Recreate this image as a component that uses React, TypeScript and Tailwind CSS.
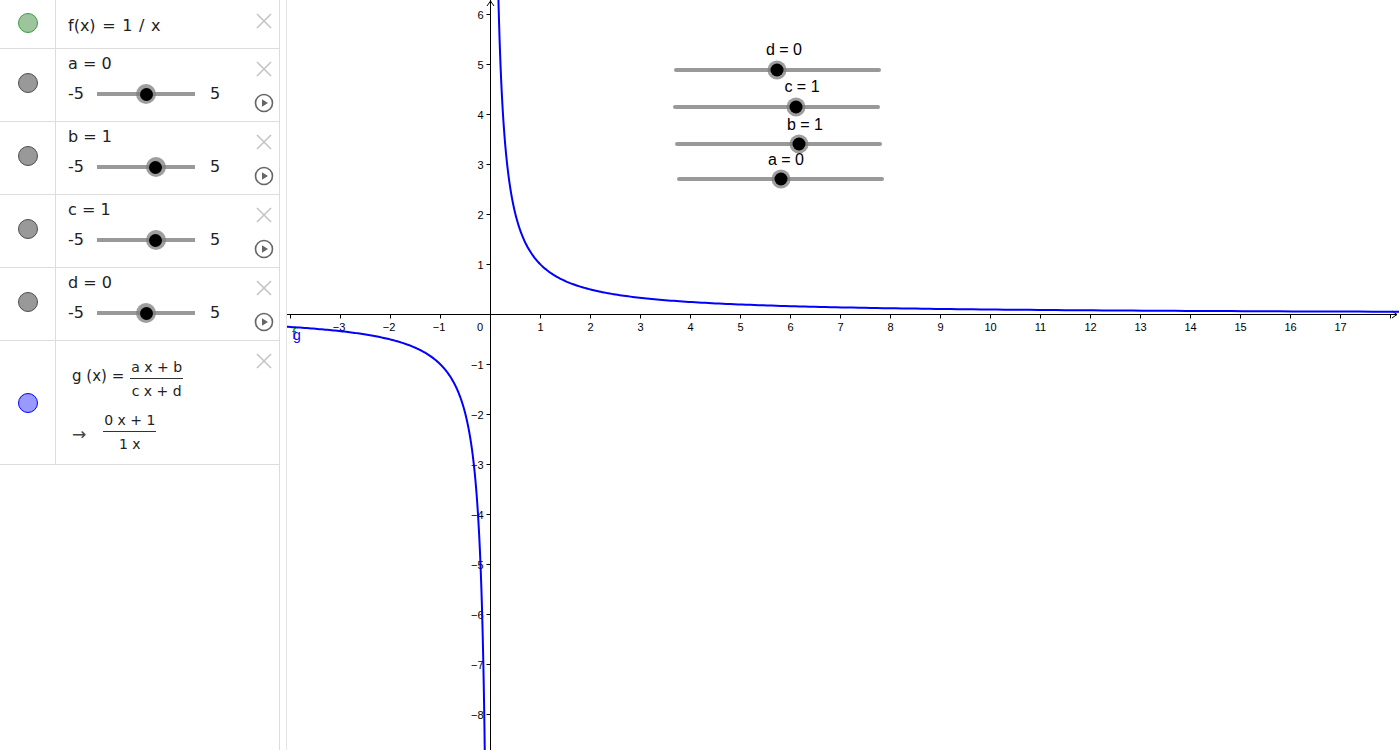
import React from "react";

const OX = 203.5;
const OY = 314.5;
const S = 50;

function XIcon() {
  return (
    <svg width="16" height="16" viewBox="0 0 16 16">
      <line x1="1" y1="1" x2="15" y2="15" stroke="#c4c4c4" strokeWidth="1.6" />
      <line x1="15" y1="1" x2="1" y2="15" stroke="#c4c4c4" strokeWidth="1.6" />
    </svg>
  );
}

function PlayIcon() {
  return (
    <svg width="20" height="20" viewBox="0 0 20 20">
      <circle cx="10" cy="10" r="8.5" fill="none" stroke="#666" strokeWidth="1.6" />
      <polygon points="8,6.3 14,10 8,13.7" fill="#666" />
    </svg>
  );
}

function Dot({ kind }: { kind: "green" | "gray" | "blue" }) {
  const cls =
    kind === "green"
      ? "bg-[#9dc59d] border-[#3f9a3f]"
      : kind === "gray"
      ? "bg-[#999999] border-[#4d4d4d]"
      : "bg-[#9999ff] border-[#0000ff]";
  return <div className={`w-[20px] h-[20px] rounded-full border ${cls}`} />;
}

function PanelSlider({ value }: { value: number }) {
  const left = ((value + 5) / 10) * 98;
  return (
    <div className="flex items-center h-[20px]">
      <span className="w-[29px] leading-[20px]">-5</span>
      <div className="relative w-[98px] h-[4px] bg-[#999999]">
        <div
          className="absolute top-[2px] w-[20px] h-[20px] -ml-[10px] -mt-[10px] rounded-full bg-[#7d7d7d]/75 flex items-center justify-center"
          style={{ left: `${left}px` }}
        >
          <div className="w-[13px] h-[13px] rounded-full bg-black" />
        </div>
      </div>
      <span className="ml-[15px] leading-[20px]">5</span>
    </div>
  );
}

function SliderRow({ name, value }: { name: string; value: number }) {
  return (
    <div className="flex h-[73px] border-b border-[#dddddd]">
      <div className="w-[56px] border-r border-[#dddddd] flex items-center justify-center pb-[5px]">
        <Dot kind="gray" />
      </div>
      <div className="flex-1 pl-3 pt-[5px]">
        <div className="leading-[20px] h-[20px]">
          {name} = {value}
        </div>
        <div className="mt-[10px]">
          <PanelSlider value={value} />
        </div>
      </div>
      <div className="w-[30px] flex flex-col items-center pt-[12px]">
        <XIcon />
        <div className="mt-[16px]">
          <PlayIcon />
        </div>
      </div>
    </div>
  );
}

function Frac({ num, den }: { num: string; den: string }) {
  return (
    <div className="inline-flex flex-col items-stretch text-[14px]">
      <div className="text-center leading-[18px] pb-[2px] px-[1px] border-b border-[#333333]">{num}</div>
      <div className="text-center leading-[18px] pt-[3px]">{den}</div>
    </div>
  );
}

function Graph() {
  const neg: string[] = [];
  const N = 300;
  for (let i = 0; i <= N; i++) {
    const t = i / N;
    const x = -Math.exp(Math.log(4.3) + (Math.log(0.1148) - Math.log(4.3)) * t);
    neg.push(`${(OX + S * x).toFixed(2)},${(OY - S / x).toFixed(2)}`);
  }
  const pos: string[] = [];
  for (let i = 0; i <= N; i++) {
    const t = i / N;
    const x = Math.exp(Math.log(0.158) + (Math.log(18.5) - Math.log(0.158)) * t);
    pos.push(`${(OX + S * x).toFixed(2)},${(OY - S / x).toFixed(2)}`);
  }
  const xt: number[] = [];
  for (let k = -4; k <= 18; k++) if (k !== 0) xt.push(k);
  const yt: number[] = [];
  for (let k = -8; k <= 6; k++) if (k !== 0) yt.push(k);
  const fmt = (k: number) => (k < 0 ? `\u2212${-k}` : `${k}`);
  const font = "'Liberation Sans', Arial, sans-serif";

  const sliders = [
    { label: "d = 0", x1: 389, x2: 592, y: 70, knob: 490, lx: 497, ly: 55 },
    { label: "c = 1", x1: 388, x2: 591, y: 107, knob: 509, lx: 515, ly: 92 },
    { label: "b = 1", x1: 390, x2: 593, y: 144, knob: 512, lx: 518, ly: 130 },
    { label: "a = 0", x1: 392, x2: 595, y: 179, knob: 494, lx: 499, ly: 165 },
  ];

  return (
    <svg width="1112" height="750" viewBox="0 0 1112 750" className="block">
      <line x1="0" y1={OY} x2="1110" y2={OY} stroke="#000" strokeWidth="1" />
      <line x1={OX} y1="0" x2={OX} y2="750" stroke="#000" strokeWidth="1" />
      <polyline points={`${OX - 3.5},6 ${OX},1 ${OX + 3.5},6`} fill="none" stroke="#000" strokeWidth="1" />
      <polyline points={`1105,${OY - 3.5} 1110,${OY} 1105,${OY + 3.5}`} fill="none" stroke="#000" strokeWidth="1" />
      {xt.map((k) => (
        <line key={`xt${k}`} x1={OX + S * k} y1={OY} x2={OX + S * k} y2={OY + 4} stroke="#000" strokeWidth="1" />
      ))}
      {yt.map((k) => (
        <line key={`yt${k}`} x1={OX - 4} y1={OY - S * k} x2={OX} y2={OY - S * k} stroke="#000" strokeWidth="1" />
      ))}
      {xt
        .filter((k) => k >= -3 && k <= 17)
        .map((k) => (
          <text key={`xl${k}`} x={OX + S * k + (k < 0 ? -1.5 : 0)} y="331" fontSize="11" fontFamily={font} textAnchor="middle" fill="#000">
            {fmt(k)}
          </text>
        ))}
      {yt.map((k) => (
        <text key={`yl${k}`} x="196.5" y={OY - S * k + 4} fontSize="11" fontFamily={font} textAnchor="end" fill="#000">
          {fmt(k)}
        </text>
      ))}
      <text x="196" y="331" fontSize="11" fontFamily={font} textAnchor="end" fill="#000">
        0
      </text>

      <polyline points={neg.join(" ")} fill="none" stroke="#0000ff" strokeWidth="2" />
      <polyline points={pos.join(" ")} fill="none" stroke="#0000ff" strokeWidth="2" />
      <text x="5" y="339" fontSize="14" fontFamily={font} fill="#008000">
        f
      </text>
      <text x="6" y="340" fontSize="14" fontFamily={font} fill="#0000ff">
        g
      </text>

      {sliders.map((s) => (
        <g key={s.label}>
          <text x={s.lx} y={s.ly} fontSize="16" fontFamily={font} textAnchor="middle" fill="#000">
            {s.label}
          </text>
          <line x1={s.x1} y1={s.y} x2={s.x2} y2={s.y} stroke="#999999" strokeWidth="4" strokeLinecap="round" />
          <circle cx={s.knob} cy={s.y} r="9.5" fill="#7d7d7d" fillOpacity="0.75" />
          <circle cx={s.knob} cy={s.y} r="6.5" fill="#000" />
        </g>
      ))}
    </svg>
  );
}

export default function App() {
  return (
    <div className="flex w-[1399px] h-[750px] bg-white overflow-hidden font-['DejaVu_Sans',sans-serif] text-[16px] text-[#222222]">
      <div className="w-[280px] h-full border-r border-[#dcdcdc] flex flex-col">
        <div className="flex h-[49px] border-b border-[#dddddd]">
          <div className="w-[56px] border-r border-[#dddddd] flex items-center justify-center pb-[3px]">
            <Dot kind="green" />
          </div>
          <div className="flex-1 pl-3 pt-[16px] leading-[20px] [word-spacing:1.5px]">f(x) = 1 / x</div>
          <div className="w-[30px] flex flex-col items-center pt-[13px]">
            <XIcon />
          </div>
        </div>
        <SliderRow name="a" value={0} />
        <SliderRow name="b" value={1} />
        <SliderRow name="c" value={1} />
        <SliderRow name="d" value={0} />
        <div className="flex h-[124px] border-b border-[#dddddd]">
          <div className="w-[56px] border-r border-[#dddddd] flex items-center justify-center">
            <Dot kind="blue" />
          </div>
          <div className="flex-1 pl-4 pt-[14px]">
            <div className="flex items-center">
              <span className="text-[15px] leading-[20px] pb-[3px]">g (x) =</span>
              <div className="ml-[6px]">
                <Frac num="a x + b" den="c x + d" />
              </div>
            </div>
            <div className="flex items-center mt-[8px]">
              <span className="text-[17px] leading-[20px] text-[#444444] pt-[6px]">→</span>
              <div className="ml-[17px]">
                <Frac num="0 x + 1" den="1 x" />
              </div>
            </div>
          </div>
          <div className="w-[30px] flex flex-col items-center pt-[12px]">
            <XIcon />
          </div>
        </div>
        <div className="flex-1" />
      </div>
      <div className="w-[7px] h-full border-r border-[#e4e4e4]" />
      <div className="flex-1 h-full">
        <Graph />
      </div>
    </div>
  );
}
